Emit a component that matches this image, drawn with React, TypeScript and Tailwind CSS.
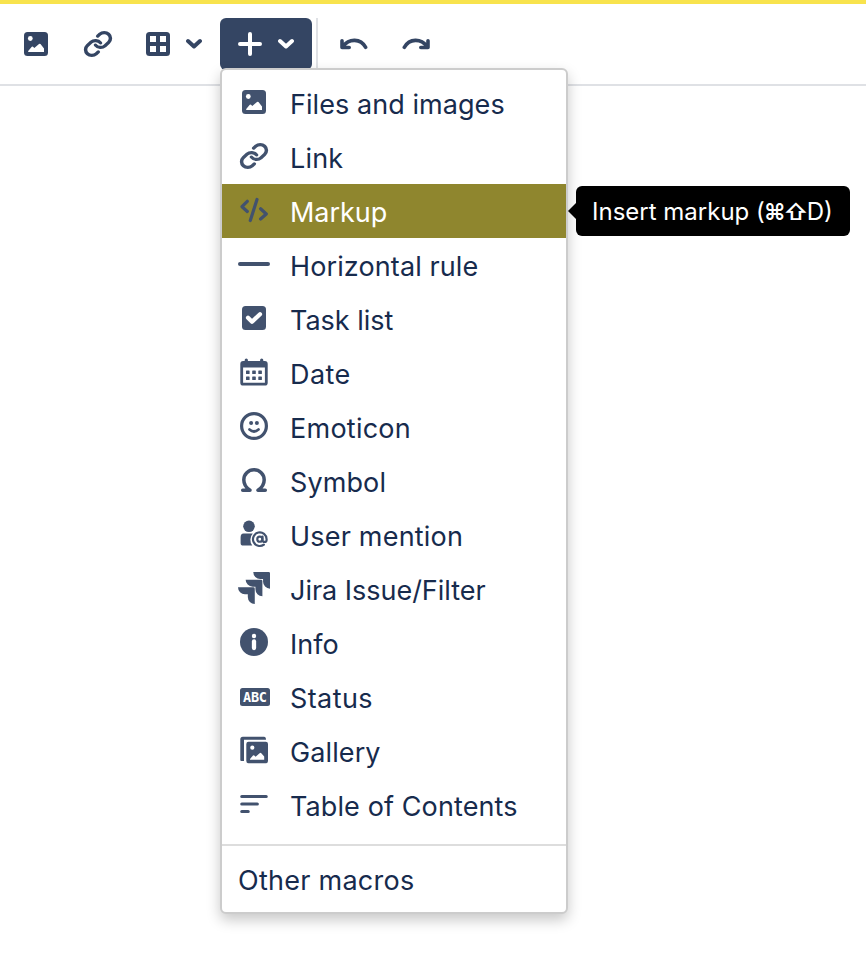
import type { ReactNode } from 'react';

const FONT = "font-['Inter','Liberation_Sans',sans-serif]";

function Icon({ children }: { children: ReactNode }) {
  return (
    <svg
      viewBox="0 0 32 32"
      className="block size-8 shrink-0"
      fill="none"
      stroke="currentColor"
      strokeWidth="3.2"
      strokeLinecap="round"
      strokeLinejoin="round"
    >
      {children}
    </svg>
  );
}

const ImageIcon = () => (
  <Icon>
    <rect x="4" y="4" width="24" height="24" rx="3.5" fill="currentColor" stroke="none" />
    <circle cx="10.3" cy="10.5" r="2.4" fill="#fff" stroke="none" />
    <path d="M8.2 24v-1l3.6-4.2q.6-.6 1.2 0l1.3 1.3 4.7-4.1q.8-.7 1.5.1L24 20.5V24z" fill="#fff" stroke="none" />
  </Icon>
);

const LinkIcon = () => (
  <Icon>
    <g transform="translate(16 16) scale(1.25 1.15) translate(-12 -12)" strokeWidth="2.8">
      <path d="M10 13a5 5 0 0 0 7.54.54l3-3a5 5 0 0 0-7.07-7.07l-1.72 1.71" />
      <path d="M14 11a5 5 0 0 0-7.54-.54l-3 3a5 5 0 0 0 7.07 7.07l1.71-1.71" />
    </g>
  </Icon>
);

const MarkupIcon = () => (
  <Icon>
    <path d="M9.3 7.3 4 12.7l5.3 4.8M19 5.5l-6.7 21M22.6 14.8l5.7 5.2-5.7 5" />
  </Icon>
);

const RuleIcon = () => (
  <Icon>
    <path d="M2 16h28" strokeWidth="4" />
  </Icon>
);

const TaskIcon = () => (
  <Icon>
    <rect x="4" y="4" width="24" height="24" rx="3.5" fill="currentColor" stroke="none" />
    <path d="m10 15.8 4 4 8-7.6" stroke="#fff" strokeWidth="4.2" />
  </Icon>
);

const DateIcon = () => (
  <Icon>
    <rect x="3.7" y="6.5" width="24.6" height="21.7" rx="1.5" strokeWidth="2.8" />
    <path d="M3 6.5h26v5H3z" fill="currentColor" stroke="none" />
    <path d="M8.3 4v3M23.7 4v3" />
    <g fill="currentColor" stroke="none">
      {[8, 14.2, 20.3].map((x) => [14.4, 20.4].map((y) => (
        <rect key={`${x}-${y}`} x={x} y={y} width="3.6" height="3.6" rx=".6" />
      )))}
    </g>
  </Icon>
);

const SmileIcon = () => (
  <Icon>
    <circle cx="16" cy="16" r="12.4" />
    <circle cx="13.1" cy="13" r="2" fill="currentColor" stroke="none" />
    <circle cx="18.9" cy="13" r="2" fill="currentColor" stroke="none" />
    <path d="M11.5 19.5q4.5 4 9 0" strokeWidth="2.7" />
  </Icon>
);

const OmegaIcon = () => (
  <Icon>
    <path strokeWidth="3.5" d="M4.7 26.3H12C7.8 23.5 5.8 20 5.8 15.7a10.2 10 0 0 1 20.4 0c0 4.3-2 7.8-6.2 10.6h7.3" />
  </Icon>
);

const MentionIcon = () => (
  <Icon>
    <circle cx="11" cy="8.3" r="5.8" fill="currentColor" stroke="none" />
    <path d="M5.5 15.6h9.3a9.3 9.3 0 0 0-.5 12H5.2a2.6 2.6 0 0 1-2.6-2.6v-5.5q0-3.9 2.9-3.9z" fill="currentColor" stroke="none" />
    <g transform="translate(21.8 21.2) scale(.68) translate(-12 -12)" strokeWidth="3.2">
      <circle cx="12" cy="12" r="3.7" />
      <path d="M16 8v5a3 3 0 0 0 6 0v-1a10 10 0 1 0-4 8" />
    </g>
  </Icon>
);

const JiraIcon = () => (
  <Icon>
    <path
      transform="scale(1.3333)"
      fill="currentColor"
      stroke="none"
      d="M11.571 11.513H0a5.218 5.218 0 0 0 5.232 5.215h2.13v2.057A5.215 5.215 0 0 0 12.575 24V12.518a1.005 1.005 0 0 0-1.005-1.005zm5.723-5.756H5.736a5.215 5.215 0 0 0 5.215 5.214h2.129v2.058a5.218 5.218 0 0 0 5.215 5.214V6.758a1.001 1.001 0 0 0-1.001-1.001zM23.013 0H11.455a5.215 5.215 0 0 0 5.215 5.215h2.129v2.057A5.215 5.215 0 0 0 24 12.483V1.005A1.001 1.001 0 0 0 23.013 0Z"
    />
  </Icon>
);

const InfoIcon = () => (
  <Icon>
    <circle cx="16" cy="16" r="14" fill="currentColor" stroke="none" />
    <circle cx="16" cy="10" r="2.2" fill="#fff" stroke="none" />
    <path d="M16 15.5V22" stroke="#fff" strokeWidth="4.3" />
  </Icon>
);

const StatusIcon = () => (
  <Icon>
    <rect x="2" y="8" width="30" height="18" rx="2.5" fill="currentColor" stroke="none" />
    <text x="5" y="22" fill="#fff" stroke="none" textLength="24" className="font-['DejaVu_Sans_Mono',monospace] text-[13.5px] font-bold">
      ABC
    </text>
  </Icon>
);

const GalleryIcon = () => (
  <Icon>
    <path d="M2.3 26V5.2q0-2.5 2.5-2.5H26q2 0 2 3H6V27H3.3q-1 0-1-1z" fill="currentColor" stroke="none" />
    <rect x="8.3" y="7.7" width="21.7" height="21.6" rx="2.2" fill="currentColor" stroke="none" />
    <circle cx="14.3" cy="13.7" r="2.1" fill="#fff" stroke="none" />
    <path d="M12 25.7v-.8l3-3.4q.7-.6 1.3 0l1.3 1.2 4-3.5q.9-.8 1.7 0l2.9 3.3v3.2z" fill="#fff" stroke="none" />
  </Icon>
);

const TocIcon = () => (
  <Icon>
    <path d="M3.8 8.5h24.4M3.8 16h15.5M3.8 23.5h6.4" />
  </Icon>
);

const TableIcon = () => (
  <Icon>
    <rect x="4" y="4" width="24" height="24" rx="3.5" fill="currentColor" stroke="none" />
    <path d="M8 8h6v6H8zM18 8h6v6h-6zM8 18h6v6H8zM18 18h6v6h-6z" fill="#fff" stroke="none" />
  </Icon>
);

const Chevron = () => (
  <svg viewBox="0 0 16 16" className="block size-4 shrink-0" fill="none" stroke="currentColor" strokeWidth="4" strokeLinecap="round" strokeLinejoin="round">
    <path d="m2 5 6 5.5L14 5" />
  </svg>
);

const UndoIcon = () => (
  <Icon>
    <path strokeWidth="3.6" d="M4 12.8v6.7h7.2M5 18.3C11 10.2 22.5 10.2 27.7 19.3" />
  </Icon>
);

type Item = { label: string; icon: ReactNode; tracking?: string };

const items: Item[] = [
  { label: 'Files and images', icon: <ImageIcon />, tracking: 'tracking-[0.06px]' },
  { label: 'Link', icon: <LinkIcon />, tracking: 'tracking-[0.2px]' },
  { label: 'Markup', icon: <MarkupIcon />, tracking: 'tracking-[-0.05px]' },
  { label: 'Horizontal rule', icon: <RuleIcon /> },
  { label: 'Task list', icon: <TaskIcon />, tracking: 'tracking-normal' },
  { label: 'Date', icon: <DateIcon />, tracking: 'tracking-[0.4px]' },
  { label: 'Emoticon', icon: <SmileIcon />, tracking: 'tracking-[0.25px]' },
  { label: 'Symbol', icon: <OmegaIcon /> },
  { label: 'User mention', icon: <MentionIcon />, tracking: 'tracking-[0.2px]' },
  { label: 'Jira Issue/Filter', icon: <JiraIcon />, tracking: 'tracking-[-0.02px]' },
  { label: 'Info', icon: <InfoIcon />, tracking: 'tracking-normal' },
  { label: 'Status', icon: <StatusIcon />, tracking: 'tracking-[0.4px]' },
  { label: 'Gallery', icon: <GalleryIcon /> },
  { label: 'Table of Contents', icon: <TocIcon /> },
];

function Tooltip() {
  return (
    <div className="absolute top-[2px] left-[354px] flex h-[50px] w-[274px] items-center rounded-md bg-black pt-0.5 pl-4 text-[24px] font-[430] tracking-normal whitespace-nowrap text-white">
      <span className="absolute top-[17px] -left-2 border-y-8 border-r-8 border-y-transparent border-r-black" />
      <span>Insert markup (</span>
      <span className="flex w-5 justify-center text-[22.5px] font-semibold">⌘</span>
      <span className="flex w-[22px] justify-center text-[23px] font-semibold">⇧</span>
      <span>D)</span>
    </div>
  );
}

function Menu() {
  return (
    <div className="absolute top-[50px] left-0 h-[846px] w-[348px] rounded-md border-2 border-[#cccccc] bg-white pt-1.5 text-[#172b4d] shadow-[0_6px_14px_rgba(0,0,0,0.22)]">
      <ul>
        {items.map(({ label, icon, tracking = 'tracking-[0.11px]' }) => {
          const active = label === 'Markup';
          return (
            <li key={label} className={`relative flex h-[54px] items-center pl-4 ${active ? 'bg-[#8f862e] text-white' : ''}`}>
              <span className="mb-[2px] text-[#42526e]">{icon}</span>
              <span className={`ml-5 pt-1 font-[430] whitespace-nowrap ${tracking}`}>{label}</span>
              {active && <Tooltip />}
            </li>
          );
        })}
      </ul>
      <div className="mt-3 border-t-2 border-[#dddddd] pt-1.5">
        <div className="flex h-[54px] items-center pt-1 pl-4 font-[430] tracking-[0.26px]">Other macros</div>
      </div>
    </div>
  );
}

export default function App() {
  return (
    <div className={`h-[954px] w-[866px] overflow-hidden bg-white text-[27px] leading-[54px] text-[#344563] ${FONT}`}>
      <div className="h-1 bg-[#f8e34d]" />
      <header className="flex h-[82px] items-start border-b-2 border-[#dfe1e5] pt-3.5">
        <div className="flex h-[52px] items-center pl-5">
          <ImageIcon />
          <span className="ml-[30px]"><LinkIcon /></span>
          <span className="ml-7"><TableIcon /></span>
          <span className="ml-3"><Chevron /></span>
        </div>
        <div className="relative ml-[18px]">
          <button className="flex h-[52px] w-[92px] items-center rounded-md bg-[#344563] pl-3.5 text-white">
            <Icon><path d="M16 6v20M6 16h20" strokeWidth="4" /></Icon>
            <span className="ml-3"><Chevron /></span>
          </button>
          <Menu />
        </div>
        <div className="ml-1 flex h-[50px] items-center border-l-2 border-[#dfe1e5] pt-0.5 pl-5">
          <UndoIcon />
          <span className="ml-[30px] -scale-x-100"><UndoIcon /></span>
        </div>
      </header>
    </div>
  );
}
